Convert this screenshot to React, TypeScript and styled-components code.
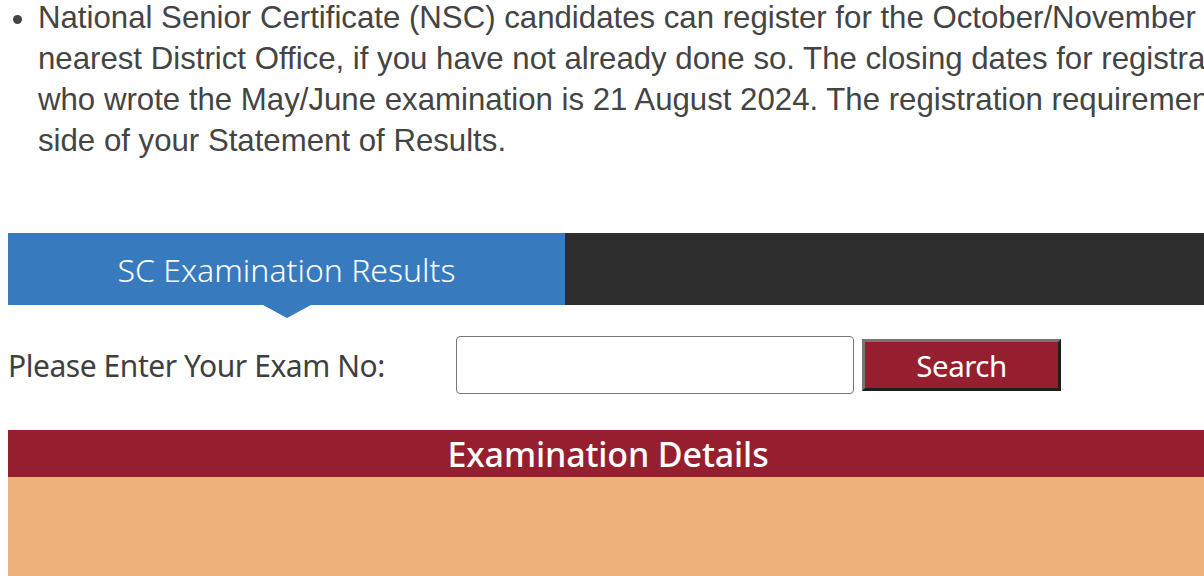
import React from "react";
import styled, { createGlobalStyle } from "styled-components";

const Global = createGlobalStyle`
  html, body { margin: 0; padding: 0; overflow: hidden; background: #fff; }
  body { padding: 0 8px; width: 1200px; }
`;

const Page = styled.div`
  width: 1200px;
  display: flex;
  flex-direction: column;
`;

const Notice = styled.ul`
  margin: -3px 0 0 0;
  padding: 0 0 0 30px;
  font-family: "Liberation Sans", Arial, sans-serif;
  font-size: 31.2px;
  line-height: 41px;
  color: #444;
  list-style: disc;
  white-space: nowrap;
`;

const Line = styled.span`
  display: block;
`;

const Tabs = styled.div`
  margin-top: 72px;
  display: flex;
  height: 72px;
  background: #2d2d2d;
`;

const ActiveTab = styled.div`
  position: relative;
  width: 557px;
  background: #377bbe;
  color: #fff;
  font-family: "Noto Sans", sans-serif;
  font-weight: 300;
  font-size: 32px;
  display: flex;
  align-items: center;
  justify-content: center;
  &::after {
    content: "";
    position: absolute;
    left: 50%;
    top: 100%;
    margin-left: -24px;
    border-left: 24px solid transparent;
    border-right: 24px solid transparent;
    border-top: 13px solid #377bbe;
  }
`;

const SearchRow = styled.form`
  margin-top: 31px;
  display: flex;
  align-items: center;
  height: 58px;
`;

const Label = styled.label`
  width: 448px;
  font-family: "Noto Sans", sans-serif;
  font-size: 30px;
  color: #3f3f3f;
  letter-spacing: -0.45px;
`;

const Input = styled.input`
  box-sizing: border-box;
  width: 398px;
  height: 58px;
  border: 1.5px solid #777;
  border-radius: 4px;
  background: #fff;
  outline: none;
`;

const Button = styled.button`
  box-sizing: border-box;
  margin-left: 8px;
  width: 199px;
  height: 52px;
  background: #951f2e;
  color: #fff;
  font-family: "Noto Sans", sans-serif;
  font-size: 29.5px;
  letter-spacing: -0.5px;
  border-style: solid;
  border-width: 3px;
  border-color: #767676 #1f1f1f #1f1f1f #767676;
  padding: 0;
  cursor: pointer;
`;

const DetailsHeader = styled.div`
  margin-top: 36px;
  height: 47px;
  background: #951f2e;
  color: #fff;
  font-family: "Noto Sans", sans-serif;
  font-size: 34px;
  font-weight: 500;
  letter-spacing: -0.15px;
  display: flex;
  align-items: center;
  justify-content: center;
`;

const DetailsBody = styled.div`
  height: 160px;
  background: #eeb17b;
`;

export default function App() {
  return (
    <>
      <Global />
      <Page>
        <Notice>
          <li>
            <Line>National Senior Certificate (NSC) candidates can register for the October/November 2024</Line>
            <Line>nearest District Office, if you have not already done so. The closing dates for registration</Line>
            <Line>who wrote the May/June examination is 21 August 2024. The registration requirements</Line>
            <Line>side of your Statement of Results.</Line>
          </li>
        </Notice>
        <Tabs>
          <ActiveTab>SC Examination Results</ActiveTab>
        </Tabs>
        <SearchRow onSubmit={(e) => e.preventDefault()}>
          <Label htmlFor="examno">Please Enter Your Exam No:</Label>
          <Input id="examno" type="text" />
          <Button type="submit">Search</Button>
        </SearchRow>
        <DetailsHeader>Examination Details</DetailsHeader>
        <DetailsBody />
      </Page>
    </>
  );
}
